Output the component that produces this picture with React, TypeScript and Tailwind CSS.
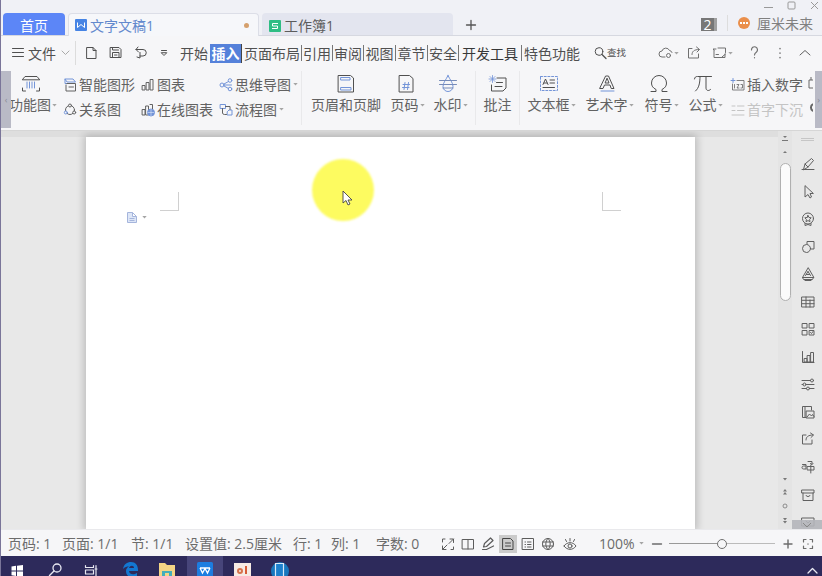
import type { ReactNode } from "react";
import clsx from "clsx";

type SvgProps = { className?: string; children: ReactNode };

// All line icons share a 20x20 box
function Svg({ className, children }: SvgProps) {
  return (
    <svg
      viewBox="0 0 20 20"
      fill="none"
      stroke="currentColor"
      strokeWidth="1"
      strokeLinecap="round"
      strokeLinejoin="round"
      className={clsx("h-5 w-5 shrink-0", className)}
    >
      {children}
    </svg>
  );
}

function Caret({ className }: { className?: string }) {
  return (
    <svg viewBox="0 0 5 3" className={clsx("h-[3px] w-[5px] shrink-0 fill-[#a5a5a5]", className)}>
      <path d="M.3 0h4.400L2.500 2.600z" />
    </svg>
  );
}

const BLUE = "#7394d8";

function TitleBar() {
  return (
    <header className="flex h-9 shrink-0 border-b border-[#d6d8e0] bg-[#f0f1f6]">
      <div className="flex items-end pl-0.5">
        <div className="flex h-[22px] w-[62px] items-center justify-center rounded-t-[4px] bg-[#5c86f7] pt-0.5 text-[14px] text-white">
          首页
        </div>
        <div className="ml-[3px] -mb-px flex h-[23px] w-[191px] items-center rounded-t-[4px] border border-b-0 border-[#dcdee7] bg-[#f6f7fa] pl-[6px] pr-[9px]">
          <svg viewBox="0 0 12 12" className="h-3 w-3 shrink-0">
            <rect width="12" height="12" rx="1" fill="#4684e4" />
            <path d="M2.500 3.500v5L6 5.500l3.500 3v-5" fill="none" stroke="#fff" />
          </svg>
          <span className="ml-[3px] text-[14px] text-[#6389cd]">文字文稿1</span>
          <span className="ml-auto h-[5px] w-[5px] rounded-full bg-[#d5a06d]" />
        </div>
        <div className="ml-[3px] flex h-[22px] w-[191px] items-center rounded-t-[4px] bg-[#e3e5ef] pl-[7px] pt-[3px]">
          <svg viewBox="0 0 12 12" className="h-3 w-3 shrink-0">
            <rect width="12" height="12" rx="1" fill="#2fbd84" />
            <path d="M9 3.500H3.500V6h5v2.500H3" fill="none" stroke="#fff" />
          </svg>
          <span className="ml-[3px] text-[14px] text-[#5c5c5c]">工作簿1</span>
        </div>
        <Svg className="ml-[8px] translate-y-px text-[#555]">
          <path d="M10 4.500v9M5.500 9h9" strokeWidth="1.300" />
        </Svg>
      </div>
      <div className="ml-auto flex flex-col items-end">
        <div className="flex h-3 items-center gap-[14px] pr-[3px] text-[#999]">
          <svg viewBox="0 0 9 9" className="h-[9px] w-[9px]" fill="none" stroke="currentColor">
            <path d="M0 6.500h9" />
          </svg>
          <svg viewBox="0 0 9 9" className="h-[9px] w-[9px]" fill="none" stroke="currentColor">
            <rect x="1" y="1" width="7" height="7" rx="1" />
          </svg>
          <svg viewBox="0 0 9 9" className="h-[9px] w-[9px]" fill="none" stroke="currentColor">
            <path d="M1 1l7 7M8 1L1 8" />
          </svg>
        </div>
        <div className="flex h-6 items-center pr-[9px]">
          <div className="flex h-[13px] w-[16px] translate-y-px border-r-[3px] border-[#a0a0a0] bg-[#777]">
            <span className="w-full text-center text-[14px] leading-[13px] text-white">2</span>
          </div>
          <div className="mx-[10px] h-4 w-px bg-[#ddd]" />
          <svg viewBox="0 0 12 12" className="mr-[7px] h-3 w-3">
            <circle cx="6" cy="6" r="6" fill="#ea8f4b" />
            <path d="M2 6h2M5 6h2M8 6h2" stroke="#fff" strokeWidth="1.800" />
          </svg>
          <span className="text-[14px] text-[#808080]">厘米未来</span>
        </div>
      </div>
    </header>
  );
}

const menuTabs = [
  { label: "页面布局", cls: "w-[58px]" },
  { label: "引用", cls: "w-[31px] border-l" },
  { label: "审阅", cls: "w-[31px] border-l" },
  { label: "视图", cls: "w-[32px] border-l" },
  { label: "章节", cls: "w-[32px] border-l" },
  { label: "安全", cls: "w-[31px] border-l" },
  { label: "开发工具", cls: "w-[63px] border-l text-[#383838]" },
  { label: "特色功能", cls: "w-[61px] border-l" },
];

function MenuBar() {
  return (
    <nav className="flex h-8 shrink-0 items-center bg-[#f6f6f8] pt-[2px] text-[14px] text-[#505050]">
      <Svg className="ml-[7px]">
        <path d="M4.500 5.500h11M4.500 9.500h11M4.500 13.500h11" />
      </Svg>
      <span>文件</span>
      <Svg className="-ml-px text-[#aaa]">
        <path d="M7 8l3.500 3.500L14 8" />
      </Svg>
      <div className="h-6 w-px bg-[#dcdcdc]" />
      <Svg className="ml-[5px]">
        <path d="M6 4.500h6l3 3v8H6zM12 4.500v3h3" />
      </Svg>
      <Svg className="ml-[5px]">
        <path d="M4.500 4.500h8.500l2 2v8h-10.500zM6.500 14.500V9.500h6.500v5M6.500 4.500V7h6M8.500 12h2.500" />
      </Svg>
      <Svg className="ml-[5px]">
        <path d="M7 4L5 6.500 7.500 9M5 6.500h7a3 3 0 010 6.500H9M9 9.500v5.500l-3-1" />
      </Svg>
      <Svg className="ml-[3px]">
        <path d="M7.500 7.500h5M7.500 10l2.500 2.500 2.500-2.500z" />
      </Svg>
      <span className="ml-[6px] w-[30px]">开始</span>
      <span className="flex h-[19px] w-8 items-center justify-center border-r border-[#444] bg-[#5581da] font-bold text-white">
        插入
      </span>
      <div className="ml-px flex">
        {menuTabs.map((t) => (
          <span
            key={t.label}
            className={clsx("flex h-4 items-center justify-center whitespace-nowrap border-[#777]", t.cls)}
          >
            {t.label}
          </span>
        ))}
      </div>
      <Svg className="ml-[8px]">
        <circle cx="9" cy="8.500" r="3.800" />
        <path d="M12 11.500l4 4" strokeWidth="1.300" />
      </Svg>
      <span className="-ml-[3px] text-[9.500px]">查找</span>
      <Svg className="ml-[30px] text-[#707070]">
        <path d="M9 14H6a3 3 0 010-6 4 4 0 017.500-.500A3 3 0 0116 9.500" />
        <circle cx="12.500" cy="12.500" r="2" />
      </Svg>
      <Caret className="-ml-[2px]" />
      <Svg className="ml-[5px] text-[#707070]">
        <path d="M8 5.500H4.500v9.500h10v-4M8 11.500c0-3 2-5 7-5M12.500 4l3 2.500-2.500 2.500" />
      </Svg>
      <Svg className="ml-[6px] text-[#707070]">
        <path d="M4 7v7.500h11V11M4 7l-1-1h3M8 5h7.500v4.500M6 11.500h2.500M12 14l3.500-3" />
      </Svg>
      <Caret className="-ml-[2px]" />
      <Svg className="ml-[11px] text-[#707070]">
        <path d="M7.500 7a3 3 0 115 2c-1.500 1-2 1.500-2 3M10.500 14.500v.300" strokeWidth="1.200" />
      </Svg>
      <Svg className="ml-[6px] text-[#707070]">
        <path d="M10 5.500v.200M10 10v.200M10 14.500v.200" strokeWidth="1.500" />
      </Svg>
      <Svg className="ml-[5px] text-[#606060]">
        <path d="M5 12l5-4.500 5 4.500" />
      </Svg>
    </nav>
  );
}

type BigProps = { icon: ReactNode; label: string; caret?: boolean; className: string };

function BigButton({ icon, label, caret, className }: BigProps) {
  return (
    <div className={clsx("flex shrink-0 flex-col items-center pt-[6px]", className)}>
      <Svg className="text-[#505050]">{icon}</Svg>
      <div className="relative mt-px h-5 whitespace-nowrap leading-5">
        {label}
        {caret && <Caret className="absolute top-[9px] -right-[6px]" />}
      </div>
    </div>
  );
}

type SmallProps = { icon: ReactNode; label: string; caret?: boolean; dim?: boolean };

function SmallButton({ icon, label, caret, dim }: SmallProps) {
  return (
    <div className={clsx("flex h-[25px] items-center whitespace-nowrap", dim && "text-[#c4c4c4]")}>
      <Svg className="-mr-px">{icon}</Svg>
      {label}
      {caret && <Caret className="ml-[2px]" />}
    </div>
  );
}

function Divider({ className }: { className?: string }) {
  return <div className={clsx("mt-[3px] h-[54px] w-px shrink-0 bg-[#e9e9eb]", className)} />;
}

function Ribbon() {
  return (
    <section className="flex h-[62px] shrink-0 overflow-hidden bg-[#f6f6f8] text-[14px] text-[#626262]">
      <div className="mt-[3px] flex h-[57px] w-[10px] shrink-0 items-center justify-center bg-[#b9bac6] text-[9px] text-[#8b8c98]">
        ‹
      </div>
      <div className="flex w-[46px] flex-col items-end overflow-hidden pt-[6px]">
        <Svg className="mr-[16px] text-[#505050]">
          <path d="M1.500 5.500l2.500-3h12l2.500 3zM1.500 14v3h3M18.500 14v3h-3" />
          <path d="M6 8v6M8.500 8v6M11 8v6M13.500 8v6" stroke={BLUE} />
        </Svg>
        <div className="mt-px flex h-5 items-center whitespace-nowrap leading-5">
          功能图
          <Caret className="ml-px" />
        </div>
      </div>
      <div className="ml-[3px] w-[78px] shrink-0 pt-[4px]">
        <SmallButton
          label="智能图形"
          icon={
            <>
              <path d="M5 4h8l2.500 3H7L5 4v4.500h2" stroke={BLUE} />
              <path d="M7 8.500h8.500V16H6v-6M9 12h4.500" />
            </>
          }
        />
        <SmallButton
          label="关系图"
          icon={
            <>
              <circle cx="10" cy="10" r="4.500" />
              <circle cx="10" cy="5.500" r="1.500" fill="#f6f6f8" />
              <circle cx="5.800" cy="12.500" r="1.500" fill="#f6f6f8" stroke={BLUE} />
              <circle cx="14.200" cy="12.500" r="1.500" fill="#f6f6f8" />
            </>
          }
        />
      </div>
      <div className="w-[78px] shrink-0 pt-[4px]">
        <SmallButton
          label="图表"
          icon={<path d="M4.500 10.500H7V15H4.500zM8.500 7.500H11V15H8.500zM12.500 4.500H15V15h-2.500z" />}
        />
        <SmallButton
          label="在线图表"
          icon={
            <>
              <path d="M4.500 9.500H7V15H4.500zM8 6h2.500v9H8zM12 4.500h2.500V9" />
              <circle cx="13" cy="12.500" r="3.500" fill={BLUE} stroke={BLUE} />
              <path d="M10 12.500h6M13 9.500v6" stroke="#dfe8fa" strokeWidth="0.600" />
            </>
          }
        />
      </div>
      <div className="w-[85px] shrink-0 pt-[4px]">
        <SmallButton
          caret
          label="思维导图"
          icon={
            <g stroke={BLUE}>
              <circle cx="6" cy="10" r="2" />
              <circle cx="14" cy="5.500" r="1.800" />
              <circle cx="14" cy="14" r="1.800" />
              <path d="M8 9l4.500-2.500M8 11l4.500 2.500M8 10h7.500" />
            </g>
          }
        />
        <SmallButton
          caret
          label="流程图"
          icon={
            <>
              <path d="M4.500 4.500h5v4h-5zM11.500 11.500l1.500-1.500h3v5h-4.500z" stroke={BLUE} />
              <path d="M6.500 8.500V13a2 2 0 002 1.500h2M9.500 6.500H14v3" />
            </>
          }
        />
      </div>
      <Divider />
      <BigButton
        className="w-[88px]"
        label="页眉和页脚"
        icon={
          <>
            <path d="M2.500 1.500h12l3 2.500v14h-15z" />
            <path d="M5 3.500h9v2.500H5zM5 13.500h10V16H5z" stroke={BLUE} />
          </>
        }
      />
      <BigButton
        className="w-[29px]"
        label="页码"
        caret
        icon={
          <>
            <path d="M4.500 1.500h10L18 4.500v13.500H4.500z" />
            <path d="M8 10.500h6.500M7.500 13.500H14M10 8.500l-1 7M13.500 8.500l-1 7" stroke={BLUE} />
          </>
        }
      />
      <BigButton
        className="ml-[11px] w-[35px]"
        label="水印"
        caret
        icon={
          <>
            <path d="M10 1.500C8 6 5 8.500 5 12.500a5 5 0 0010 0C15 8.500 12 6 10 1.500z" stroke={BLUE} />
            <path d="M1.500 6.500h17M1.500 10.500h17M5 14h10" stroke="#768bb8" />
          </>
        }
      />
      <Divider className="ml-[10px]" />
      <BigButton
        className="w-[43px]"
        label="批注"
        icon={
          <>
            <path d="M9 4h9v10l-3 3H3.500v-6M8.500 8.500h6M7 12.500h7" />
            <path d="M4.500 1.500v7M1 5h7M2 2.500l5 5M7 2.500l-5 5" stroke={BLUE} strokeWidth="0.800" />
          </>
        }
      />
      <Divider />
      <BigButton
        className="w-[57px]"
        label="文本框"
        caret
        icon={
          <>
            <path d="M1.500 2.500h17v14h-17z" stroke={BLUE} strokeDasharray="2 1.700" />
            <path d="M4 10.500L6.500 5 9 10.500M5 9h3M11 6h4.500M11 9h4.500M4 13.500h11.500" />
          </>
        }
      />
      <BigButton
        className="w-[59px]"
        label="艺术字"
        caret
        icon={
          <>
            <path d="M9 2h2.500L17 14.500h-2.800L13 11H7.500L6 14.500H3zM8.500 9h3.500L10.200 4.500z" />
            <path d="M4 17h13" stroke={BLUE} />
          </>
        }
      />
      <BigButton
        className="w-[45px]"
        label="符号"
        caret
        icon={<path d="M2 17.500h5v-2C4 14 2.500 12 2.500 9a7.500 7.500 0 0115 0c0 3-1.500 5-4.500 6.500v2h5" />}
      />
      <BigButton
        className="w-[43px]"
        label="公式"
        caret
        icon={<path d="M1.500 5c.5-2 1-2.500 3-2.500h14M7 2.500C7 9 6 14 2.500 17M13 2.500V14c0 2.500 2.500 3.500 4.500 1.500" />}
      />
      <div className="ml-[4px] w-[79px] shrink-0 pt-[4px]">
        <SmallButton
          label="插入数字"
          icon={
            <>
              <path
                d="M9 5.500h7V15H4.500V9M6.500 9.500V13M9 9.500h2l-2 3.500h2M13 9.500h1.500V13H13"
                strokeWidth="0.800"
              />
              <path d="M5 3.500v4M3 5.500h4" stroke={BLUE} />
            </>
          }
        />
        <SmallButton
          label="首字下沉"
          dim
          icon={<path d="M4 6h3M9.500 6H16M4 10.500h3M9.500 10.500H16M4 15h12" />}
        />
      </div>
      <svg viewBox="0 0 6 44" className="mt-[8px] h-11 w-[6px] shrink-0" fill="none" stroke="#666">
        <path d="M6 4H2v8h4M4 4V1" />
        <path d="M6 28a4 4 0 000 7" strokeWidth="2" />
      </svg>
      <div className="ml-auto mt-[3px] flex h-[57px] w-[7px] shrink-0 items-center justify-center bg-[#b9bac6] text-[9px] text-[#8b8c98]">
        ›
      </div>
    </section>
  );
}

const sideIcons: ReactNode[] = [
  <path d="M4 15.500h12M5.500 15.500L7 10l6.500-5.500 2 2L10 13zM7 10l3 3" />,
  <path d="M7 4v11l3-2.500 2 3.500 1.500-1-1.500-3.500h3z" />,
  <>
    <circle cx="10" cy="9.500" r="5.500" />
    <path d="M10 6.500l1 2 2.200.300-1.600 1.600.400 2.200-2-1-2 1 .400-2.200-1.600-1.600L9 8.500zM7 14.500v2l3-1 3 1v-2" />
  </>,
  <>
    <path d="M9 7V4.500h7V12h-3" />
    <circle cx="8.500" cy="11.500" r="4" />
  </>,
  <path d="M10 4L4.500 13.500h11zM10 7.500l-2.500 4M10 7.500l2.500 4M8.500 10.500h3M4.500 13.500l1 2h9l1-2M7 16.500h6" />,
  <path d="M4 5h12v10H4zM4 8.300h12M4 11.700h12M8 5v10M12 8v7" />,
  <path d="M4.500 4.500H9V9H4.500zM11.500 4.500H16V9h-4.500zM4.500 11.500H9V16H4.500zM11.500 11.500H16V16h-4.500zM12.500 13.500l1 1 1.500-2" />,
  <path d="M4.500 4.500v11H16M6.500 11.500H9v3.500H6.500zM9.500 8.500H12V15H9.500zM13 5.500h2.500V15H13z" />,
  <>
    <path d="M4 6.500h8.500M4 10.500h1M8.500 10.500H16M4 14.500h4.500M11.500 14.500H16" />
    <circle cx="14" cy="6.500" r="1.500" />
    <circle cx="6.500" cy="10.500" r="1.500" />
    <circle cx="10" cy="14.500" r="1.500" />
  </>,
  <path d="M8 15.500H4.500V4.500h9V8M7 4.500v11M8.500 9h7.500v7H8.500zM9 15l2.500-3 2 2 1-1.500 1.500 2" />,
  <path d="M8 6H4.500v9h9.500v-4M8 11c0-3 2-5 7-5M12.500 4L15.500 6l-2.500 2.500" />,
  <path d="M4.500 7.500H8V12H5.500a1.500 1.500 0 010-3H8M10 4.500h4v3l-1.500-1M14 7.500l1-1M9.500 9.500h6.500v3.500H9.500zM12.800 8v8" />,
  <path d="M4 5h12v3H4zM5 8v7.500h10V8M8 10.500c0 1.500 4 1.500 4 0" />,
  <path d="M4 6h12v8H4zM8 9l2 2 2-2" />,
];

function Workspace() {
  return (
    <main className="relative flex h-[399px] shrink-0 overflow-hidden bg-[#e8e8e8]">
      <div className="flex flex-1 flex-col overflow-hidden border-t border-[#d6d6d6]">
        <div className="h-[6px] shrink-0 bg-[#dedede]" />
        <div className="ml-[85px] w-[609px] flex-1 bg-white px-[74px] pt-[55px] shadow-[0_0_8px_2px_rgba(0,0,0,0.2)]">
          <div className="flex justify-between">
            <div className="h-[19px] w-[19px] border-r border-b border-[#d0d0d0]" />
            <div className="h-[19px] w-[19px] border-b border-l border-[#d0d0d0]" />
          </div>
          <div className="-ml-[34px] flex items-center">
            <svg viewBox="0 0 12 13" className="h-[13px] w-3" fill="#dde6f7" stroke="#a5b5dc">
              <path d="M1.500 1.500h5l4 4v6h-9zM6.500 1.500v4h4M3.500 7.500h5M3.500 9.500h5" />
            </svg>
            <Caret className="ml-[4px]" />
          </div>
        </div>
      </div>
      <div className="flex w-[14px] shrink-0 flex-col items-center border-t border-[#d6d6d6] bg-[#e4e4e4] text-[#777]">
        <svg viewBox="0 0 8 28" className="mt-[3px] h-7 w-2" fill="currentColor">
          <path d="M2 2h4L4 4zM1 6h6v1H1zM2 19l2-2 2 2z" />
        </svg>
        <div className="mt-px h-[138px] w-[11px] rounded-full border border-[#b0b0b0] bg-[#fbfbfb]" />
        <svg viewBox="0 0 8 54" className="mt-auto h-[54px] w-2" fill="currentColor">
          <path d="M2 3h4L4 5.500zM2 16.500L4 14l2 2.500zM2 19.500L4 17l2 2.500zM2 43h4l-2 2.500zM2 46h4l-2 2.500z" />
          <circle cx="4" cy="31" r="2" fill="none" stroke="currentColor" strokeWidth="0.800" />
        </svg>
      </div>
      <div className="flex w-[30px] shrink-0 flex-col items-center border-t border-[#d6d6d6] pt-[7px] text-[#606060]">
        <div className="ml-px h-[3px] w-[13px] shrink-0 border-y border-[#c6c6c6]" />
        <div className="ml-px mt-[13px] flex flex-col gap-[7.550px]">
          {sideIcons.map((icon, i) => (
            <Svg key={i}>{icon}</Svg>
          ))}
        </div>
      </div>
      <div className="absolute right-0 bottom-0 flex h-[9px] w-[30px] items-center justify-center bg-[#b4b5ba]/90">
        <svg viewBox="0 0 10 6" className="h-[6px] w-[10px]" fill="none" stroke="#888">
          <path d="M1 1l4 4 4-4" />
        </svg>
      </div>
      {/* click highlight and pointer */}
      <div className="absolute top-[29px] left-[311px] h-[62px] w-[62px] rounded-full bg-[#fdfb60] blur-[1px]" />
      <svg viewBox="0 0 11 17" className="absolute top-[60px] left-[341px] h-[17px] w-[11px]">
        <path d="M1 1v12l3-2.500 2 4.500 2-1-2-4h4z" fill="#fff" stroke="#444" strokeWidth="0.900" />
      </svg>
    </main>
  );
}

function StatusBar() {
  return (
    <footer className="flex h-[27px] shrink-0 items-center border-t border-[#e9e9ec] bg-[#f6f6f8] pt-px pl-[7px] text-[14px] whitespace-nowrap text-[#6c6c6c]">
      <span className="w-[54px]">页码: 1</span>
      <span className="w-[69px]">页面: 1/1</span>
      <span className="w-[54px]">节: 1/1</span>
      <span className="w-[108px]">设置值: 2.5厘米</span>
      <span className="w-[38px]">行: 1</span>
      <span className="w-[45px]">列: 1</span>
      <span className="w-[62px]">字数: 0</span>
      <div className="flex items-center text-[#5c5c5c]">
        <Svg>
          <path d="M12 5h3.500v3.500M15.500 5L11 9.500M8 15.500H4.500V12M4.500 15.500L9 11M4.500 8V5H7M15.500 13v2.500H13" />
        </Svg>
        <Svg>
          <path d="M4.500 5.500h11v9.500h-11zM10 5.500V15" />
        </Svg>
        <Svg>
          <path d="M5.500 13l1-3.500L12.500 4l2.500 2.500-6.500 6zM4.500 15.500h4l7-3.500" strokeWidth="1.200" />
        </Svg>
        <div className="mx-px flex h-[18px] w-[18px] items-center justify-center bg-[#cbcbcb]">
          <Svg className="text-[#444]">
            <path d="M5 4.500h7.500l2.500 2.500v8.500H5zM7.500 9h5M7.500 12h5" />
          </Svg>
        </div>
        <Svg>
          <path d="M4.500 4.500h11v11h-11zM7 8h.500M7 10.500h.500M7 13h.500M9.500 8H13M9.500 10.500H13M9.500 13H13" />
        </Svg>
        <Svg>
          <circle cx="10" cy="10" r="5.500" />
          <path d="M4.500 8h11M4.500 12h11M10 4.500c-3 3-3 8 0 11M10 4.500c3 3 3 8 0 11" />
        </Svg>
        <Svg className="ml-[2px]">
          <path d="M4 12c3-4.500 9-4.500 12 0-3 4.500-9 4.500-12 0M10 4.500v2.500M5.500 5.500l1 2M14.500 5.500l-1 2" />
          <circle cx="10" cy="12" r="2" />
        </Svg>
      </div>
      <span className="ml-[19px] w-[39px]">100%</span>
      <Caret className="ml-px" />
      <Svg className="ml-[3px]">
        <path d="M5.500 10h9" strokeWidth="1.400" />
      </Svg>
      <div className="ml-[2px] flex w-[106px] items-center">
        <div className="h-px flex-1 bg-[#999]" />
        <div className="h-[10px] w-[10px] rounded-full border border-[#707070]" />
        <div className="h-px flex-1 bg-[#bbb]" />
      </div>
      <Svg className="ml-[3px]">
        <path d="M6 10h8M10 6v8" strokeWidth="1.400" />
      </Svg>
      <Svg>
        <path d="M5.500 8V5.500H8M12 5.500h2.500V8M14.500 12v2.500H12M8 14.500H5.500V12M10 9.800v.400" strokeWidth="1.200" />
      </Svg>
    </footer>
  );
}

function Taskbar() {
  return (
    <div className="flex h-5 shrink-0 overflow-hidden bg-[#2d2a5b] text-[#e8e8f2]">
      <Svg className="ml-[6px] mt-[5px]">
        <path
          d="M4.500 5.500l4.500-.700V9.500H4.500zM10 4.700l6-.700v5.500h-6zM4.500 10.500H9V15l-4.500-.700zM10 10.500h6V16l-6-.800z"
          fill="#fff"
          stroke="none"
        />
      </Svg>
      <Svg className="ml-[18px] mt-[4px]">
        <circle cx="12" cy="8" r="4" strokeWidth="1.300" />
        <path d="M9 11l-4.500 4.500" strokeWidth="1.400" />
      </Svg>
      <Svg className="ml-[16px] mt-[5px]">
        <path d="M4.500 4.500v2h8v-2M4.500 9h8v4h-8zM4.500 17v-1.500h8V17M15 4.500v12M14 8h2" strokeWidth="1.200" />
      </Svg>
      <svg viewBox="0 0 18 18" className="ml-[21px] mt-[5px] h-[18px] w-[18px]">
        <path
          d="M1 8C2 3 5 1 9 1c4.500 0 7 3 7 8v1H7c.5 4 5 4 8 2v3c-5 3-11 1-11-5 0-2 1-3.500 3-4.500C5 5.500 2.500 6 1 8zm6-1h5c0-3-4-3-5 0z"
          fill="#1378d2"
        />
      </svg>
      <svg viewBox="0 0 18 16" className="ml-[18px] mt-[6px] h-4 w-[18px]">
        <path d="M1 1h6l2 2h8v12H1z" fill="#f4d585" />
        <path d="M4 9h10v6H4z" fill="#45aebb" />
        <path d="M7 11h4v4H7z" fill="#f4d585" />
      </svg>
      <div className="ml-[11px] flex w-[36px] justify-center bg-[#47457a]">
        <svg viewBox="0 0 16 16" className="mt-[6px] h-4 w-4">
          <rect width="16" height="16" rx="1.500" fill="#1c7de0" />
          <path d="M3 6h10M3 6l2.500 5L8 6.500l2.500 4.500L13 6" fill="none" stroke="#fff" strokeWidth="1.300" />
        </svg>
      </div>
      <svg viewBox="0 0 17 16" className="ml-[11px] mt-[7px] h-4 w-[17px]">
        <rect width="17" height="16" fill="#f6ebe4" />
        <circle cx="6" cy="8" r="2" fill="none" stroke="#d6734c" strokeWidth="2" />
        <path d="M11 3h2v8h-2z" fill="#d65c37" />
      </svg>
      <svg viewBox="0 0 20 20" className="ml-[19px] mt-[5px] h-5 w-5">
        <circle cx="10" cy="10" r="9" fill="#1877bd" />
        <path d="M5.500 2.500h8V18h-8z" fill="#1c7fcb" stroke="#d7e9f8" strokeWidth="1.200" />
      </svg>
      <Svg className="ml-auto mt-[5px]">
        <path d="M6 12l4.500-4.500L15 12" strokeWidth="1.300" />
      </Svg>
    </div>
  );
}

export default function App() {
  return (
    <div className="flex h-[576px] w-[822px] flex-col overflow-hidden border-l border-[#7a7599] bg-[#f6f6f8] font-['Open_Sans','Noto_Sans_CJK_SC',sans-serif]">
      <TitleBar />
      <MenuBar />
      <Ribbon />
      <Workspace />
      <StatusBar />
      <Taskbar />
    </div>
  );
}
